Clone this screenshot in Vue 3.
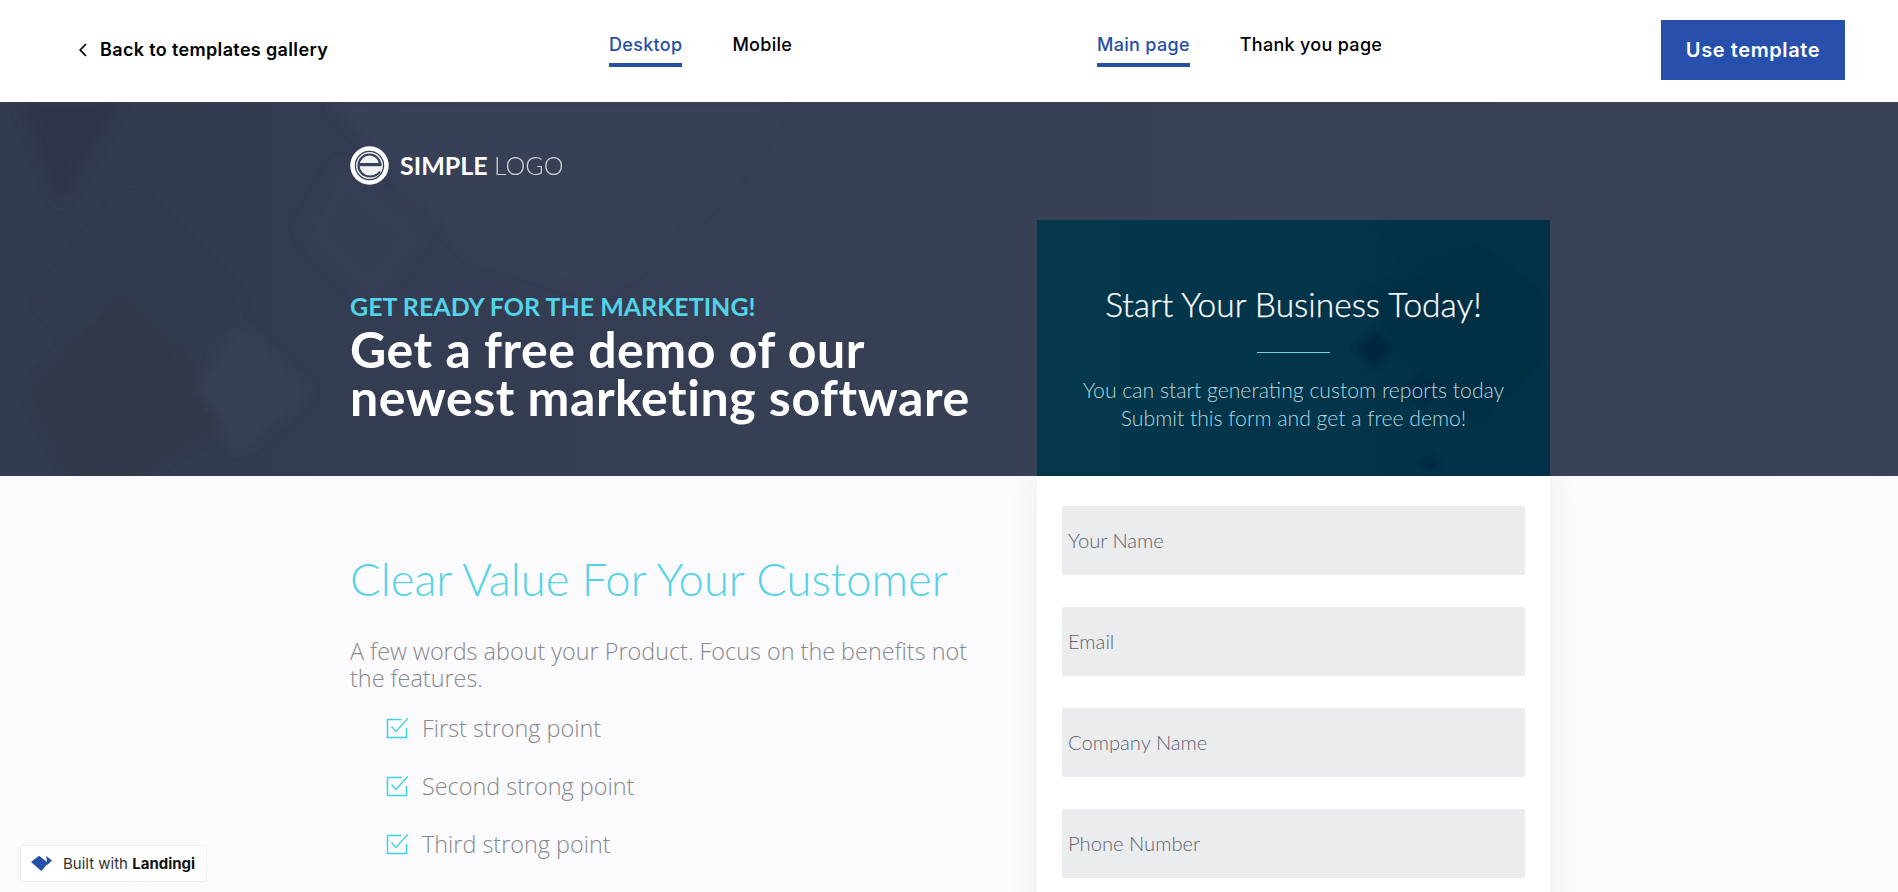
<script setup>
const tabsView = [
  { label: 'Desktop', active: true },
  { label: 'Mobile', active: false }
]
const tabsPage = [
  { label: 'Main page', active: true },
  { label: 'Thank you page', active: false }
]
const points = ['First strong point', 'Second strong point', 'Third strong point']
const fields = ['Your Name', 'Email', 'Company Name', 'Phone Number']
</script>

<template>
  <div class="page">
    <header class="topbar">
      <a class="back">
        <svg class="chev" width="10" height="16" viewBox="0 0 10 16"><path d="M8 2 2.2 8 8 14" fill="none" stroke="#000" stroke-width="1.7"/></svg>
        <span>Back to templates gallery</span>
      </a>
      <nav class="tabs tabs-view">
        <span v-for="t in tabsView" :key="t.label" class="tab" :class="{ active: t.active }">{{ t.label }}</span>
      </nav>
      <nav class="tabs tabs-page">
        <span v-for="t in tabsPage" :key="t.label" class="tab" :class="{ active: t.active }">{{ t.label }}</span>
      </nav>
      <button class="use">Use template</button>
    </header>

    <section class="hero">
      <svg class="hero-art" width="1898" height="374" viewBox="0 0 1898 374" preserveAspectRatio="none">
        <defs>
          <filter id="soft"><feGaussianBlur stdDeviation="7"/></filter>
          <linearGradient id="fade" x1="0" x2="1" y1="0" y2="0">
            <stop offset="0" stop-color="#333b4f"/>
            <stop offset="0.3" stop-color="#353d53"/>
            <stop offset="0.5" stop-color="#384055"/>
            <stop offset="1" stop-color="#3a4256"/>
          </linearGradient>
        </defs>
        <rect width="1898" height="374" fill="url(#fade)"/>
        <g filter="url(#soft)">
          <path d="M330 0 H780 C750 70 660 150 600 190 L470 150 Z" fill="#383f57"/>
          <path d="M20 0 H120 L60 105 Z" fill="#2e3548"/>
          <path d="M130 90 L240 200 L130 300 L40 200 Z" fill="#333a4e"/>
          <path d="M120 190 L240 310 L135 374 H70 L30 290 Z" fill="#303749"/>
          <path d="M240 225 L310 290 L240 350 L195 285 Z" fill="#393f57"/>
          <path d="M340 60 L425 130 L375 205 L300 130 Z" fill="#363d53"/>
        </g>
      </svg>
      <div class="hero-inner">
        <div class="hero-left">
          <div class="logo">
            <svg width="39" height="39" viewBox="0 0 39 39">
              <circle cx="19.5" cy="19.5" r="17" fill="none" stroke="#fff" stroke-width="4.5"/>
              <circle cx="19.5" cy="19.5" r="13.5" fill="#f2f3f5"/>
              <path d="M30 25.5c-2 3.2-5.800 5-10.500 5-6 0-11-4.800-11-11s5-11 11-11c5.800 0 10.500 4.400 10.800 10.500" fill="none" stroke="#39405a" stroke-width="2.200"/>
              <path d="M8.500 17h23v3.200h-23z" fill="#39405a"/>
            </svg>
            <span class="logo-text"><b>SIMPLE</b> <i>LOGO</i></span>
          </div>
          <div class="hero-copy">
            <div class="eyebrow">GET READY FOR THE MARKETING!</div>
            <h1>Get a free demo of our<br>newest marketing software</h1>
          </div>
        </div>
        <div class="panel">
          <svg class="panel-art" width="513" height="256" viewBox="0 0 513 256">
            <defs><filter id="soft2"><feGaussianBlur stdDeviation="3"/></filter></defs>
            <g filter="url(#soft2)">
              <path d="M440 20 L505 70 L505 140 L440 210 L365 140 L325 75 Z" fill="#022f45" opacity=".7"/>
              <path d="M340 0 L440 0 L380 60 Z" fill="#022f45" opacity=".3"/>
              <path d="M337 110 L356 129 L337 148 L318 129 Z" fill="#02263f"/>
              <path d="M393 234 L402 243 L393 252 L384 243 Z" fill="#02263f"/>
              <path d="M385 150 L405 170 L385 190 L365 170 Z" fill="#022c44"/>
            </g>
          </svg>
          <div class="panel-title">Start Your Business Today!</div>
          <div class="rule"></div>
          <p class="panel-text">You can start generating custom reports today<br>Submit this form and get a free demo!</p>
        </div>
      </div>
    </section>

    <section class="content">
      <div class="content-inner">
        <div class="value">
          <h2>Clear Value For Your Customer</h2>
          <p class="lead">A few words about your Product. Focus on the benefits not the features.</p>
          <ul class="points">
            <li v-for="p in points" :key="p">
              <svg width="23" height="22" viewBox="0 0 23 22">
                <path d="M15.500 2.500H1.500v18h19V11" fill="none" stroke="#3fd2e4" stroke-width="1.500"/>
                <path d="M5.500 9.500 10 14.500 21.800 1.200" fill="none" stroke="#3fd2e4" stroke-width="1.300"/>
              </svg>
              <span>{{ p }}</span>
            </li>
          </ul>
        </div>
        <form class="card">
          <input v-for="f in fields" :key="f" class="field" type="text" :placeholder="f" />
        </form>
      </div>
    </section>

    <a class="badge">
      <svg width="22" height="17" viewBox="0 0 22 17">
        <path d="M0 7 8 .7 17.300 8 10.300 16Z" fill="#264fa8"/>
        <path d="M15.300 1 21 5.500 16.300 10Z" fill="#264fa8"/>
      </svg>
      <span>Built with <b>Landingi</b></span>
    </a>
  </div>
</template>

<style scoped>
.page {
  position: relative;
  width: 1898px;
  height: 892px;
  overflow: hidden;
  background: #fbfafd;
  font-family: Inter, "Liberation Sans", sans-serif;
}
.topbar {
  position: relative;
  height: 102px;
  background: #fff;
  display: flex;
  align-items: flex-start;
}
.back {
  display: flex;
  align-items: center;
  gap: 12px;
  margin: 39px 0 0 78px;
  width: 531px;
  font-size: 18px;
  font-weight: 600;
  letter-spacing: .35px;
  color: #000;
  line-height: 22px;
}
.tabs {
  display: flex;
  gap: 50px;
  margin-top: 33px;
}
.tabs-view { width: 488px; }
.tabs-page { width: 564px; gap: 50px; }
.tab {
  font-size: 18px;
  font-weight: 500;
  letter-spacing: .3px;
  line-height: 24px;
  height: 30px;
  color: #000;
}
.tab.active {
  color: #2650a8;
  border-bottom: 4px solid #2650a8;
}
.use {
  margin-top: 20px;
  width: 184px;
  height: 60px;
  background: #2650ab;
  color: #fff;
  border: 0;
  font-family: inherit;
  font-size: 20px;
  font-weight: 600;
  letter-spacing: .6px;
}

.hero {
  position: relative;
  height: 374px;
  background: #3a4256;
}
.hero-art { position: absolute; left: 0; top: 0; }
.hero-inner {
  position: relative;
  width: 1200px;
  height: 374px;
  margin-left: 350px;
  display: flex;
}
.hero-left { width: 687px; }
.logo {
  display: flex;
  align-items: center;
  gap: 11px;
  margin-top: 44px;
  height: 39px;
}
.logo-text {
  font-family: Lato, sans-serif;
  font-size: 25px;
  color: #fff;
  line-height: 39px;
  white-space: nowrap;
}
.logo-text b { font-weight: 700; }
.logo-text i { font-style: normal; font-weight: 300; opacity: .75; }
.hero-copy { margin-top: 106px; }
.eyebrow {
  font-family: Lato, sans-serif;
  font-weight: 700;
  font-size: 25px;
  line-height: 30px;
  margin-bottom: 4px;
  color: #52d3e6;
}
h1 {
  margin: 0;
  font-family: Lato, sans-serif;
  font-weight: 700;
  font-size: 50px;
  letter-spacing: .55px;
  line-height: 48px;
  color: #fff;
  white-space: nowrap;
}
.panel {
  position: relative;
  width: 513px;
  height: 256px;
  margin-top: 118px;
  background: linear-gradient(90deg, #03384b, #03344a 60%, #023249);
  text-align: center;
  overflow: hidden;
}
.panel-art { position: absolute; left: 0; top: 0; }
.panel-title {
  position: relative;
  margin-top: 66px;
  font-family: Lato, sans-serif;
  font-weight: 300;
  font-size: 33.5px;
  line-height: 36px;
  color: #fff;
  -webkit-text-stroke: .25px #fff;
}
.rule {
  position: relative;
  width: 73px;
  height: 1px;
  margin: 30px 0 0 220px;
  background: #6fd3e6;
}
.panel-text {
  position: relative;
  margin: 23px 0 0;
  font-family: Lato, sans-serif;
  font-weight: 300;
  font-size: 21.2px;
  line-height: 28px;
  color: #b5d6de;
}

.content-inner {
  width: 1200px;
  margin-left: 350px;
  display: flex;
}
.value { width: 687px; }
h2 {
  margin: 0;
  padding-top: 77px;
  font-family: Lato, sans-serif;
  font-weight: 300;
  font-size: 45.4px;
  line-height: 52px;
  color: #55d3e5;
  white-space: nowrap;
}
.lead {
  margin: 33px 0 0;
  width: 630px;
  font-family: "Open Sans", sans-serif;
  font-weight: 300;
  font-size: 23.4px;
  line-height: 27px;
  color: #87888c;
}
.points {
  list-style: none;
  margin: 21px 0 0;
  padding: 0 0 0 36px;
}
.points li {
  display: flex;
  align-items: center;
  gap: 13px;
  height: 30px;
  margin-bottom: 28px;
  font-family: "Open Sans", sans-serif;
  font-weight: 300;
  font-size: 23.4px;
  color: #87888c;
}
.card {
  width: 513px;
  height: 500px;
  box-sizing: border-box;
  padding: 30px 25px 0;
  background: #fff;
  box-shadow: 0 0 30px rgba(60, 60, 90, .07);
  display: flex;
  flex-direction: column;
  gap: 32px;
}
.field {
  flex: none;
  width: 463px;
  height: 69px;
  box-sizing: border-box;
  padding: 0 6px 2px;
  background: #ebecee;
  border: 0;
  border-radius: 2px;
  font-family: Lato, sans-serif;
  font-size: 20.2px;
  font-weight: 300;
}
.field::placeholder {
  color: #5d6470;
  opacity: 1;
}
.badge {
  position: absolute;
  left: 20px;
  top: 845px;
  width: 187px;
  height: 37px;
  box-sizing: border-box;
  padding-left: 10px;
  display: flex;
  align-items: center;
  gap: 10px;
  background: #fff;
  border: 1px solid #eeeef1;
  border-radius: 3px;
  font-size: 15px;
  color: #333;
}
.badge b { color: #111; font-weight: 700; }
</style>

<style>
html, body { overflow: hidden; margin: 0; }
</style>
